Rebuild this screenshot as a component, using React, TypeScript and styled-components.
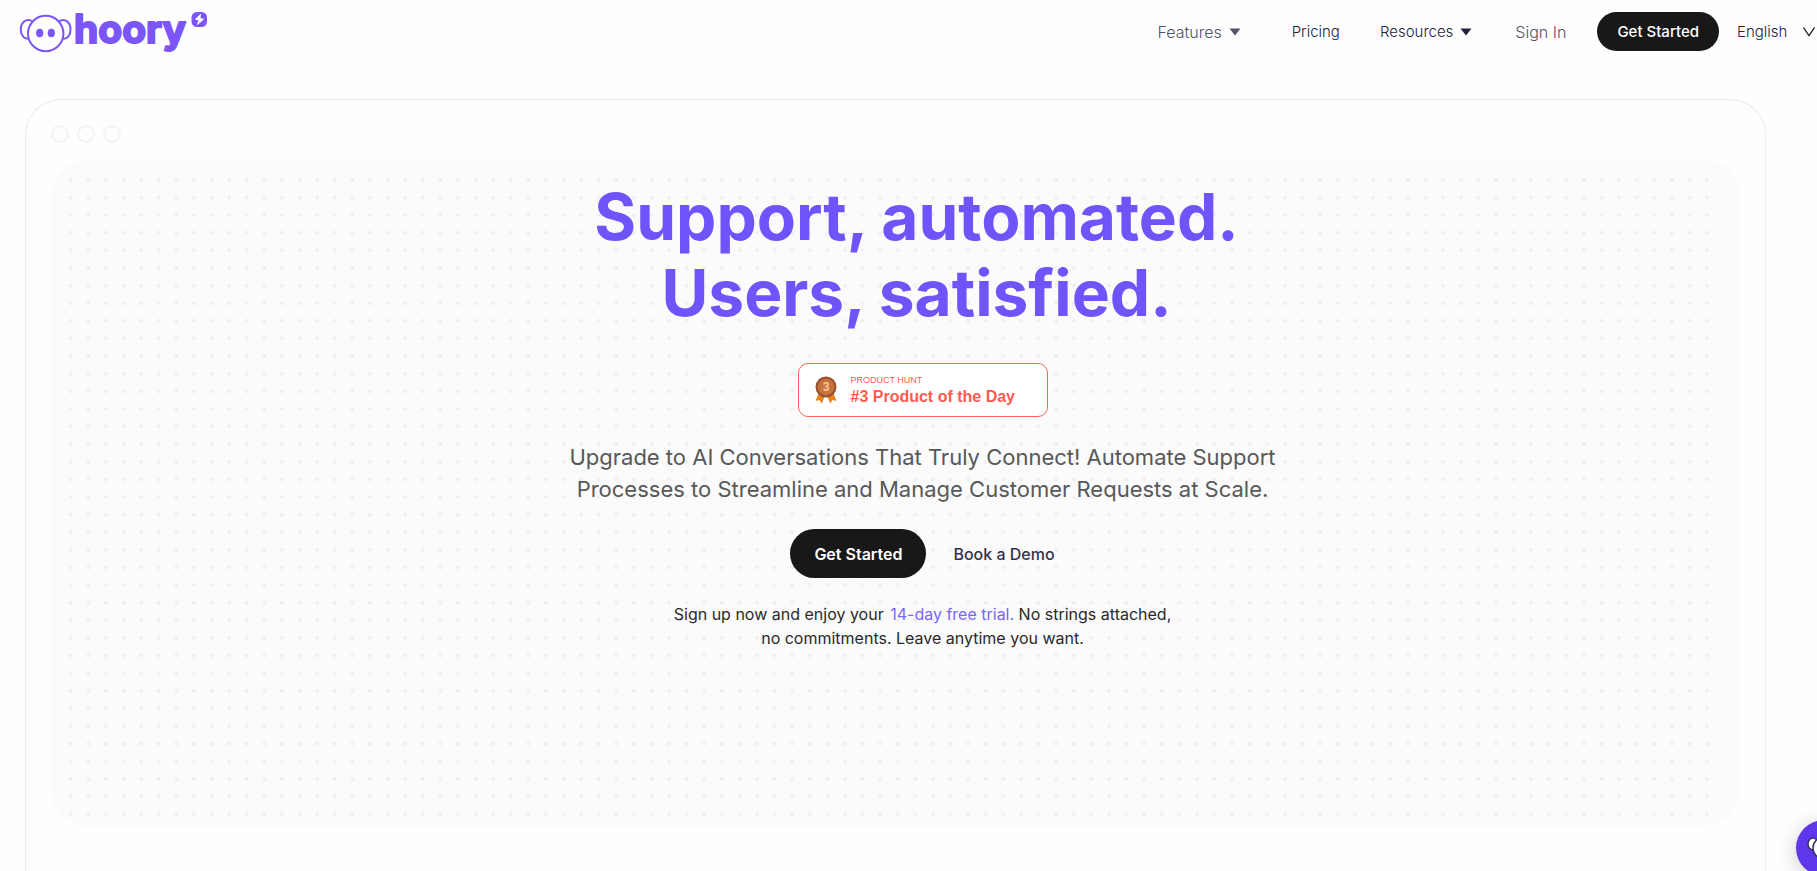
import React from "react";
import styled, { createGlobalStyle } from "styled-components";

const GlobalStyle = createGlobalStyle`
  * { box-sizing: border-box; }
  html { overflow: hidden; }
  body {
    margin: 0;
    background: #fefefe;
    font-family: Inter, "Liberation Sans", sans-serif;
    color: #181818;
  }
  h1, p { margin: 0; }
`;

const Page = styled.div`
  display: flex;
  flex-direction: column;
  min-height: 100vh;
`;

const Header = styled.header`
  display: flex;
  align-items: center;
  justify-content: space-between;
  height: 63px;
  padding-left: 18px;
`;

const LogoLink = styled.a`
  display: flex;
  text-decoration: none;
`;

const Nav = styled.nav`
  display: flex;
  align-items: center;
`;

const NavLink = styled.a<{ $tone?: string; $size?: number; $gap: number }>`
  display: flex;
  align-items: center;
  gap: 7px;
  margin-right: ${(p) => p.$gap}px;
  font-size: ${(p) => p.$size ?? 15}px;
  line-height: 24px;
  font-weight: 300;
  color: ${(p) => p.$tone ?? "#22213a"};
  text-decoration: none;
`;

const PillButton = styled.button<{ $large?: boolean }>`
  height: ${(p) => (p.$large ? 49 : 39)}px;
  padding: 0 ${(p) => (p.$large ? 24 : 20)}px;
  border: 0;
  border-radius: 25px;
  background: #181818;
  color: #fff;
  font-family: inherit;
  font-size: ${(p) => (p.$large ? 16 : 15)}px;
  font-weight: ${(p) => (p.$large ? 600 : 500)};
  cursor: pointer;
`;

const Language = styled.label`
  display: flex;
  align-items: center;
  margin-left: 18px;
  padding-right: 2px;
`;

const LanguageSelect = styled.select`
  appearance: none;
  width: 66px;
  padding: 0;
  border: 0;
  background: transparent;
  color: #22213a;
  font-family: inherit;
  font-size: 15px;
  font-weight: 300;
  line-height: 24px;
`;

const BrowserFrame = styled.main`
  flex: 1;
  display: flex;
  flex-direction: column;
  margin: 36px 51px 0 25px;
  padding: 25px 25px 0;
  border: 1px solid #ececee;
  border-bottom: 0;
  border-radius: 36px 36px 0 0;
`;

const WindowDots = styled.div`
  display: flex;
  gap: 8px;
`;

const WindowDot = styled.span`
  width: 18px;
  height: 18px;
  border: 2px solid #f3f3f4;
  border-radius: 50%;
`;

const Hero = styled.section`
  position: relative;
  margin-top: 17px;
  padding: 19px 0 176px 54px;
  border-radius: 36px;
  background: #fbfbfc;
`;

const DotGrid = styled.svg`
  position: absolute;
  inset: 11px 24px 3px 11px;
  width: calc(100% - 35px);
  height: calc(100% - 14px);
`;

const HeroContent = styled.div`
  position: relative;
  display: flex;
  flex-direction: column;
  align-items: center;
  text-align: center;
`;

const Title = styled.h1`
  padding-right: 12px;
  color: #6e54f9;
  font-size: 64px;
  line-height: 76px;
  font-weight: 700;
`;

const Award = styled.a`
  display: flex;
  align-items: center;
  gap: 14px;
  width: 250px;
  height: 54px;
  margin-top: 32px;
  padding-left: 16px;
  border: 1px solid #ff6154;
  border-radius: 10px;
  background: #fff;
  color: #ff5a4f;
  font-family: "Liberation Sans", Arial, sans-serif;
  font-weight: 700;
  text-align: left;
  text-decoration: none;
`;

const AwardText = styled.span`
  display: flex;
  flex-direction: column;
`;

const AwardSource = styled.span`
  font-size: 9px;
  line-height: 14px;
  font-weight: 400;
`;

const AwardName = styled.span`
  font-size: 16px;
  line-height: 20px;
`;

const Lead = styled.p`
  margin-top: 24px;
  color: #585858;
  font-size: 22px;
  font-weight: 400;
  line-height: 32px;
`;

const Actions = styled.div`
  display: flex;
  align-items: center;
  gap: 27px;
  margin-top: 24px;
`;

const DemoLink = styled.a`
  color: #33324a;
  font-size: 16px;
  font-weight: 500;
  text-decoration: none;
`;

const FinePrint = styled.p`
  margin-top: 24px;
  color: #2a2a2a;
  font-size: 16px;
  line-height: 24px;
`;

const Highlight = styled.span`
  margin-left: 2px;
  color: #7c65fa;
`;

const ChatButton = styled.button`
  position: fixed;
  right: -35px;
  bottom: -5px;
  width: 56px;
  height: 56px;
  padding: 0;
  border: 0;
  border-radius: 50%;
  background: #5f37ea;
  box-shadow: 0 4px 20px rgba(0, 0, 0, 0.2);
`;

const Logo = () => (
  <svg width="192" height="57" viewBox="0 -6 192 57" role="img" aria-label="hoory">
    <g fill="none" stroke="#7c55f6" strokeWidth="2">
      <path d="M15 12.500C8 8.500 2.800 13.500 2.800 20.500C2.800 27 6.500 30 10.300 29.600" />
      <path d="M40.500 12.500C47.500 8.500 52.500 13.500 52.500 20.500C52.500 27 49 30 45.200 29.600" />
      <circle cx="27.700" cy="24.500" r="17.700" />
    </g>
    <ellipse cx="21.700" cy="24" rx="3.600" ry="4.300" fill="#7c55f6" />
    <ellipse cx="33.300" cy="24" rx="3.600" ry="4.300" fill="#7c55f6" />
    <text
      x="56"
      y="34"
      fill="#7c55f6"
      stroke="#7c55f6"
      strokeWidth="2"
      strokeLinejoin="round"
      fontFamily="Inter, sans-serif"
      fontSize="39"
      fontWeight="700"
    >
      hoory
    </text>
    <rect x="173.500" y="3" width="15.500" height="15" rx="5.500" fill="#7c55f6" />
    <path
      d="M182.500 5.500L177.500 10.200L181 11L179.500 15.500L185.500 10.200L181.800 9.500Z"
      fill="#fff"
      stroke="#fff"
      strokeWidth="1"
      strokeLinejoin="round"
    />
  </svg>
);

const Caret = () => (
  <svg width="12" height="8" viewBox="0 0 12 8" aria-hidden="true">
    <path d="M0.500 0.500H11.500L6 7.500Z" fill="currentColor" />
  </svg>
);

const Medal = () => (
  <svg width="22" height="28" viewBox="0 0 22 28" aria-hidden="true">
    <path d="M4 16L0.500 25L4.500 24L6.800 27.500L10.500 18.500Z" fill="#e8831d" />
    <path d="M18 16L21.500 25L17.500 24L15.200 27.500L11.500 18.500Z" fill="#e8831d" />
    <circle cx="11" cy="11" r="10.500" fill="#9c5231" />
    <circle cx="11" cy="11" r="8.300" fill="#c6733f" />
    <text
      x="11"
      y="15"
      textAnchor="middle"
      fontFamily="Liberation Sans, sans-serif"
      fontSize="12"
      fontWeight="700"
      fill="#ffc796"
    >
      3
    </text>
  </svg>
);

export default function App() {
  return (
    <Page>
      <GlobalStyle />
      <Header>
        <LogoLink href="#home">
          <Logo />
        </LogoLink>
        <Nav aria-label="Main">
          <NavLink href="#features" $tone="#54526a" $size={16} $gap={51}>
            Features <Caret />
          </NavLink>
          <NavLink href="#pricing" $gap={40}>
            Pricing
          </NavLink>
          <NavLink href="#resources" $gap={43}>
            Resources <Caret />
          </NavLink>
          <NavLink href="#signin" $tone="#54526a" $size={16} $gap={31}>
            Sign In
          </NavLink>
          <PillButton type="button">Get Started</PillButton>
          <Language>
            <LanguageSelect aria-label="Language" defaultValue="en">
              <option value="en">English</option>
            </LanguageSelect>
            <svg width="12" height="10" viewBox="0 0 12 10" aria-hidden="true">
              <path d="M0.500 0.500L6 8.500L11.500 0.500" fill="none" stroke="#222" strokeWidth="1.300" />
            </svg>
          </Language>
        </Nav>
      </Header>
      <BrowserFrame>
        <WindowDots aria-hidden="true">
          <WindowDot />
          <WindowDot />
          <WindowDot />
        </WindowDots>
        <Hero>
          <DotGrid viewBox="0 0 1654 651" preserveAspectRatio="none" aria-hidden="true">
            <defs>
              <pattern id="dots" width="17.595" height="17.595" patternUnits="userSpaceOnUse">
                <circle cx="8.800" cy="8.800" r="2" fill="#efeff2" />
              </pattern>
            </defs>
            <rect width="1654" height="651" fill="url(#dots)" />
          </DotGrid>
          <HeroContent>
            <Title>
              Support, automated.
              <br />
              Users, satisfied.
            </Title>
            <Award href="#product-hunt">
              <Medal />
              <AwardText>
                <AwardSource>PRODUCT HUNT</AwardSource>
                <AwardName>#3 Product of the Day</AwardName>
              </AwardText>
            </Award>
            <Lead>
              Upgrade to AI Conversations That Truly Connect! Automate Support
              <br />
              Processes to Streamline and Manage Customer Requests at Scale.
            </Lead>
            <Actions>
              <PillButton type="button" $large>
                Get Started
              </PillButton>
              <DemoLink href="#demo">Book a Demo</DemoLink>
            </Actions>
            <FinePrint>
              Sign up now and enjoy your <Highlight>14-day free trial.</Highlight> No strings attached,
              <br />
              no commitments. Leave anytime you want.
            </FinePrint>
          </HeroContent>
        </Hero>
      </BrowserFrame>
      <ChatButton type="button" aria-label="Open chat">
        <svg width="56" height="56" viewBox="0 0 56 56" aria-hidden="true">
          <g fill="#fff" stroke="#3a3060" strokeWidth="1.500">
            <ellipse cx="17" cy="24" rx="5" ry="6" />
            <ellipse cx="39" cy="24" rx="5" ry="6" />
            <circle cx="28" cy="28" r="11" />
          </g>
        </svg>
      </ChatButton>
    </Page>
  );
}
